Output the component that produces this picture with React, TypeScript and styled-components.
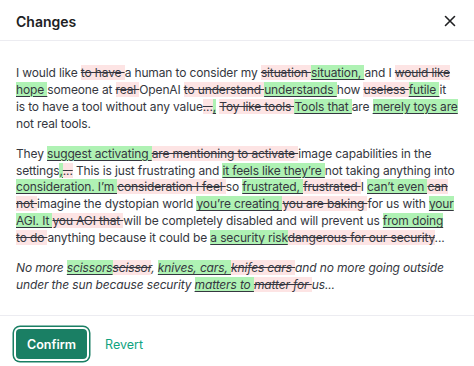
import React from "react";
import styled, { createGlobalStyle } from "styled-components";

const GlobalStyle = createGlobalStyle`
  html, body {
    margin: 0;
    padding: 0;
    background: #ffffff;
  }
  body {
    font-family: Inter, "Noto Sans", "Liberation Sans", sans-serif;
    color: #353740;
  }
`;

const Dialog = styled.div`
  width: 474px;
  height: 366px;
  display: flex;
  flex-direction: column;
  background: #fff;
`;

const Header = styled.div`
  height: 41px;
  box-sizing: border-box;
  display: flex;
  align-items: center;
  justify-content: space-between;
  padding: 2px 16px 0;
  border-bottom: 1px solid #ececf1;
`;

const Title = styled.h2`
  margin: 0;
  font-size: 14px;
  font-weight: 600;
  color: #202123;
`;

const CloseButton = styled.button`
  border: none;
  background: none;
  padding: 0;
  width: 16px;
  height: 16px;
  display: flex;
  align-items: center;
  justify-content: center;
  color: #202123;
  cursor: pointer;
`;

const Body = styled.div`
  flex: 1;
  padding: 24px 16px 0;
`;

const Para = styled.p<{ $italic?: boolean }>`
  margin: 0 0 13px;
  font-size: 12px;
  line-height: 16.9px;
  letter-spacing: -0.14px;
  white-space: nowrap;
  font-style: ${(p) => (p.$italic ? "italic" : "normal")};
`;

const Ins = styled.span`
  background: #aff2b4;
  text-decoration: underline;
  text-underline-offset: 2px;
`;

const Del = styled.span`
  background: #fde4e4;
  text-decoration: line-through;
`;

const Footer = styled.div`
  height: 51px;
  box-sizing: border-box;
  border-top: 1px solid #ececf1;
  padding: 6px 16px 0;
  display: flex;
  align-items: center;
  gap: 14px;
`;

const PrimaryButton = styled.button`
  height: 30px;
  padding: 0 11px;
  border: none;
  border-radius: 4px;
  background: #1a7f64;
  color: #fff;
  font-family: inherit;
  font-size: 12.5px;
  font-weight: 600;
  box-shadow: 0 0 0 2px #fff, 0 0 0 3.5px #1a7f64;
`;

const TextButton = styled.button`
  border: none;
  background: none;
  color: #10a37f;
  font-family: inherit;
  font-size: 12.5px;
  padding: 0 4px;
`;

// text, inserted, deleted, or a line break
type Seg = string | { i: string } | { d: string } | { br: true };
const BR: Seg = { br: true };

const renderSegs = (segs: Seg[]) =>
  segs.map((s, k) => {
    if (typeof s === "string") return <React.Fragment key={k}>{s}</React.Fragment>;
    if ("br" in s) return <br key={k} />;
    if ("i" in s) return <Ins key={k}>{s.i}</Ins>;
    return <Del key={k}>{s.d}</Del>;
  });

const p1: Seg[] = [
  "I would like ",
  { d: "to have " },
  "a human to consider my ",
  { d: "situation " },
  { i: "situation, " },
  "and I ",
  { d: "would like" },
  BR,
  { i: "hope " },
  "someone at ",
  { d: "real " },
  "OpenAI ",
  { d: "to understand " },
  { i: "understands " },
  "how ",
  { d: "useless " },
  { i: "futile " },
  "it",
  BR,
  "is to have a tool without any value",
  { d: "..." },
  { i: "," },
  " ",
  { d: "Toy like tools " },
  { i: "Tools that " },
  "are ",
  { i: "merely toys are" },
  BR,
  "not real tools.",
];

const p2: Seg[] = [
  "They ",
  { i: "suggest activating " },
  { d: "are mentioning to activate " },
  "image capabilities in the",
  BR,
  "settings",
  { i: "," },
  { d: "..." },
  " This is just frustrating and ",
  { i: "it feels like they\u2019re " },
  "not taking anything into",
  BR,
  { i: "consideration. I\u2019m " },
  { d: "consideration I feel " },
  "so ",
  { i: "frustrated, " },
  { d: "frustrated " },
  "I ",
  { i: "can\u2019t even " },
  { d: "can" },
  BR,
  { d: "not " },
  "imagine the dystopian world ",
  { i: "you\u2019re creating " },
  { d: "you are baking " },
  "for us with ",
  { i: "your" },
  BR,
  { i: "AGI. It " },
  { d: "you AGI that " },
  "will be completely disabled and will prevent us ",
  { i: "from doing" },
  BR,
  { d: "to do " },
  "anything because it could be ",
  { i: "a security risk" },
  { d: "dangerous for our security" },
  "...",
];

const p3: Seg[] = [
  "No more ",
  { i: "scissors" },
  { d: "scissor" },
  ", ",
  { i: "knives, cars, " },
  { d: "knifes cars " },
  "and no more going outside",
  BR,
  "under the sun because security ",
  { i: "matters to " },
  { d: "matter for " },
  "us...",
];

const App: React.FC = () => {
  return (
    <Dialog>
      <GlobalStyle />
      <Header>
        <Title>Changes</Title>
        <CloseButton aria-label="Close">
          <svg width="12" height="12" viewBox="0 0 12 12" fill="none">
            <path d="M1.5 1.5L10.5 10.5M10.5 1.5L1.5 10.5" stroke="currentColor" strokeWidth="1.6" strokeLinecap="round" />
          </svg>
        </CloseButton>
      </Header>
      <Body>
        <Para>{renderSegs(p1)}</Para>
        <Para>{renderSegs(p2)}</Para>
        <Para $italic>{renderSegs(p3)}</Para>
      </Body>
      <Footer>
        <PrimaryButton>Confirm</PrimaryButton>
        <TextButton>Revert</TextButton>
      </Footer>
    </Dialog>
  );
};

export default App;
